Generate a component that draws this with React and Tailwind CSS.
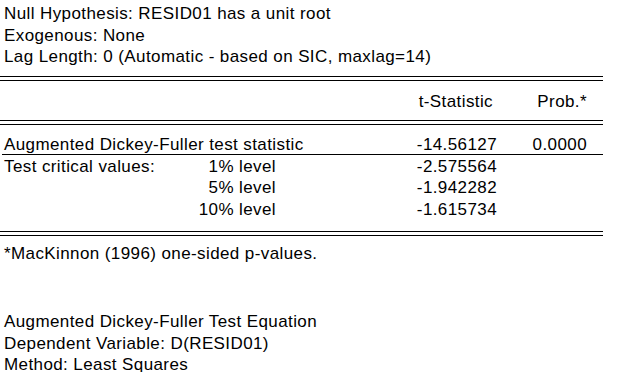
import React from 'react';

const rows = [
  { label: 'Test critical values:', level: '1% level', value: '-2.575564' },
  { label: '', level: '5% level', value: '-1.942282' },
  { label: '', level: '10% level', value: '-1.615734' },
];

function DoubleRule() {
  return <div className="h-[5px] border-y border-black" />;
}

export default function App() {
  return (
    <div
      className="w-[627px] h-[372px] bg-white text-black text-[17px] leading-[21.5px] tracking-[0.4px] overflow-hidden"
      style={{ fontFamily: '"Liberation Sans", Arial, sans-serif' }}
    >
      <div className="w-[603px]">
        {/* Header info */}
        <div className="h-[76px] pt-[3px] pl-[4px]">
          <div>Null Hypothesis: RESID01 has a unit root</div>
          <div>Exogenous: None</div>
          <div>Lag Length: 0 (Automatic - based on SIC, maxlag=14)</div>
        </div>

        <DoubleRule />

        {/* Column headers */}
        <div className="h-[39px] pt-[10px] flex pl-[4px] pr-[16px]">
          <div className="flex-1" />
          <div className="w-[100px] text-right pr-[4px]">t-Statistic</div>
          <div className="w-[90px] text-right">Prob.*</div>
        </div>

        <DoubleRule />

        {/* Test statistic */}
        <div className="ml-[2px] h-[30px] pt-[8.5px] flex pl-[2px] pr-[16px] border-b border-black">
          <div className="flex-1 whitespace-nowrap">Augmented Dickey-Fuller test statistic</div>
          <div className="w-[100px] text-right">-14.56127</div>
          <div className="w-[90px] text-right">0.0000</div>
        </div>

        {/* Critical values */}
        <div className="h-[76px] pt-[0.5px]">
          {rows.map((r) => (
            <div key={r.level} className="flex pl-[4px] pr-[16px]">
              <div className="flex-1">
                <div className="w-[272px] flex justify-between">
                  <span>{r.label}</span>
                  <span>{r.level}</span>
                </div>
              </div>
              <div className="w-[100px] text-right">{r.value}</div>
              <div className="w-[90px]" />
            </div>
          ))}
        </div>

        <DoubleRule />

        <div className="pt-[6.5px] pl-[4px]">*MacKinnon (1996) one-sided p-values.</div>

        <div className="mt-[47px] pl-[4px]">
          <div>Augmented Dickey-Fuller Test Equation</div>
          <div>Dependent Variable: D(RESID01)</div>
          <div>Method: Least Squares</div>
        </div>
      </div>
    </div>
  );
}
